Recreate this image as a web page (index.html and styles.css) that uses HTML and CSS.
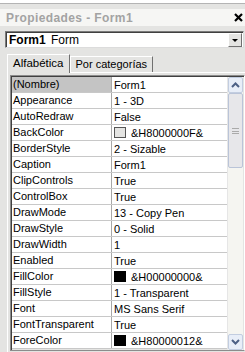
FILE: index.html
```html
<!DOCTYPE HTML>
<html>
<head>
	<title>Propiedades - Form1</title>
	<link rel="stylesheet" href="styles.css">
</head>
<body>
	<div class="topbar"></div>
	<div class="titlebar">
		<span class="title">Propiedades - Form1</span>
		<svg class="close" width="9" height="9" viewBox="0 0 9 9"><path d="M1 1 L8 8 M8 1 L1 8" stroke="#000" stroke-width="2.2"/></svg>
	</div>
	<div class="combo">
		<span class="combo-text"><b>Form1</b> Form</span>
		<span class="combo-btn"><i class="tri-down"></i></span>
	</div>
	<div class="tabs">
		<div class="tab active">Alfabética</div>
		<div class="tab">Por categorías</div>
	</div>
	<div class="panel">
		<div class="grid">
			<div class="rows">
				<div class="row sel"><span class="name">(Nombre)</span><span class="val">Form1</span></div>
				<div class="row"><span class="name">Appearance</span><span class="val">1 - 3D</span></div>
				<div class="row"><span class="name">AutoRedraw</span><span class="val">False</span></div>
				<div class="row"><span class="name">BackColor</span><span class="val"><i class="swatch light"></i>&amp;H8000000F&amp;</span></div>
				<div class="row"><span class="name">BorderStyle</span><span class="val">2 - Sizable</span></div>
				<div class="row"><span class="name">Caption</span><span class="val">Form1</span></div>
				<div class="row"><span class="name">ClipControls</span><span class="val">True</span></div>
				<div class="row"><span class="name">ControlBox</span><span class="val">True</span></div>
				<div class="row"><span class="name">DrawMode</span><span class="val">13 - Copy Pen</span></div>
				<div class="row"><span class="name">DrawStyle</span><span class="val">0 - Solid</span></div>
				<div class="row"><span class="name">DrawWidth</span><span class="val">1</span></div>
				<div class="row"><span class="name">Enabled</span><span class="val">True</span></div>
				<div class="row"><span class="name">FillColor</span><span class="val"><i class="swatch dark"></i>&amp;H00000000&amp;</span></div>
				<div class="row"><span class="name">FillStyle</span><span class="val">1 - Transparent</span></div>
				<div class="row"><span class="name">Font</span><span class="val">MS Sans Serif</span></div>
				<div class="row"><span class="name">FontTransparent</span><span class="val">True</span></div>
				<div class="row"><span class="name">ForeColor</span><span class="val"><i class="swatch dark"></i>&amp;H80000012&amp;</span></div>
			</div>
			<div class="scroll">
				<div class="sbtn">
					<svg width="9" height="6" viewBox="0 0 9 6"><path d="M1 5 L4.5 1.5 L8 5" fill="none" stroke="#4d6185" stroke-width="2"/></svg>
				</div>
				<div class="thumb"><i class="grip"></i></div>
				<div class="track"></div>
				<div class="sbtn">
					<svg width="9" height="6" viewBox="0 0 9 6"><path d="M1 1 L4.5 4.5 L8 1" fill="none" stroke="#4d6185" stroke-width="2"/></svg>
				</div>
			</div>
		</div>
	</div>
</body>
</html>
```
FILE: styles.css
```css
*, *::after, *::before{
	box-sizing: border-box;
	margin: 0;
	padding: 0;
}
html, body{
	width: 100%;
	height: 100%;
}
body{
	background-color: #e4e4e2;
	font-family: "Liberation Sans", Arial, sans-serif;
	font-size: 11px;
	color: #000;
	overflow: hidden;
}
.topbar{
	height: 4px;
	background-color: #fff;
	border-bottom: 1px solid #b4b4b4;
}
.titlebar{
	display: flex;
	align-items: center;
	justify-content: space-between;
	height: 17px;
	margin-top: 5px;
	padding: 0 2px 0 6px;
	background-color: #f6f6f4;
}
.title{
	font-weight: bold;
	font-size: 12px;
	letter-spacing: 0.4px;
	color: #a3a3a3;
}
.close{
	display: block;
}
.combo{
	display: flex;
	align-items: center;
	justify-content: space-between;
	height: 17px;
	margin: 5px 1px 0 5px;
	background-color: #fff;
	border: 1px solid #7a7a7a;
	border-right-color: #dcdcdc;
	border-bottom-color: #dcdcdc;
	box-shadow: inset 1px 1px 0 #404040;
}
.combo-text{
	padding-left: 3px;
	font-size: 12px;
}
.combo-text b{
	margin-right: 2px;
}
.combo-btn{
	display: flex;
	align-items: center;
	justify-content: center;
	width: 14px;
	height: 14px;
	margin-right: 1px;
	background-color: #e4e4e2;
	border: 1px solid #fff;
	border-right-color: #707070;
	border-bottom-color: #707070;
}
.tri-down{
	width: 0;
	height: 0;
	margin-top: 2px;
	border-left: 3px solid transparent;
	border-right: 3px solid transparent;
	border-top: 3px solid #000;
}
.tabs{
	display: flex;
	align-items: flex-end;
	height: 19px;
	margin: 5px 0 0 7px;
}
.tab{
	height: 16px;
	padding: 1px 5px 0 5px;
	font-size: 11px;
	border: 1px solid #fff;
	border-bottom: none;
	border-right: 1px solid #707070;
	background-color: #e4e4e2;
	white-space: nowrap;
}
.tab.active{
	height: 19px;
	padding: 2px 5px 0 5px;
	font-size: 11.5px;
	position: relative;
	top: 1px;
}
.panel{
	margin-left: 7px;
	height: 281px;
	padding: 2px 0 0 2px;
	border-top: 1px solid #fff;
	border-left: 1px solid #fff;
}
.grid{
	display: flex;
	height: 276px;
	border: 1px solid #8c8c8c;
	border-right-color: #fff;
	box-shadow: inset 1px 1px 0 #404040;
	padding: 1px 1px 0 1px;
}
.rows{
	flex: 1;
	display: flex;
	flex-direction: column;
}
.row{
	display: flex;
	height: 16px;
	border-bottom: 1px solid #c8c8c8;
	background-color: #fff;
}
.name{
	width: 100px;
	padding: 1px 0 0 1px;
	border-right: 1px solid #a8a8a8;
	white-space: nowrap;
	overflow: hidden;
}
.val{
	flex: 1;
	display: flex;
	align-items: center;
	padding: 0 0 0 2px;
	white-space: nowrap;
	overflow: hidden;
}
.row.sel .name{
	background-color: #c4c4c4;
}
.swatch{
	display: inline-block;
	width: 12px;
	height: 11px;
	margin-right: 5px;
	border: 1px solid #000;
}
.swatch.light{
	background-color: #e4e4e2;
	border-color: #555;
}
.swatch.dark{
	background-color: #000;
}
.scroll{
	width: 16px;
	display: flex;
	flex-direction: column;
	background-color: #f5f5f1;
	border-left: 1px solid #e6e6e6;
}
.sbtn{
	display: flex;
	align-items: center;
	justify-content: center;
	height: 16px;
	border: 1px solid #c2cde0;
	border-radius: 2px;
	background-color: #e8eef8;
}
.thumb{
	display: flex;
	align-items: center;
	justify-content: center;
	height: 75px;
	border: 1px solid #bac4d8;
	border-radius: 2px;
	background-color: #e7e7ea;
}
.grip{
	display: block;
	width: 7px;
	height: 6px;
	border-top: 1px solid #aaa;
	border-bottom: 1px solid #aaa;
	background: linear-gradient(#aaa, #aaa) 0 2px / 7px 1px no-repeat;
}
.track{
	flex: 1;
}
```
